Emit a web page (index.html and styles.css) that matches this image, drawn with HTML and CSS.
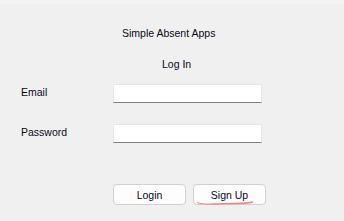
FILE: index.html
```html
<!DOCTYPE html>
<html lang="en">
<head>
  <meta charset="UTF-8">
  <title>Log In - Simple Absent Apps</title>
  <link rel="stylesheet" href="styles.css">
</head>
<body>

<div class="app">
  <div class="app-top"></div>

  <div class="app-title">Simple Absent Apps</div>
  <div class="form-title">Log In</div>

  <div class="form-row">
    <label for="email">Email</label>
    <input type="text" id="email">
  </div>

  <div class="form-row">
    <label for="senha">Password</label>
    <input type="password" id="senha">
  </div>

  <div class="actions">
    <button class="btn">Login</button>
    <button class="btn btn-signup">
      Sign Up
      <svg class="squiggle" width="58" height="5" viewBox="0 0 58 5">
        <path d="M1 2.5 Q 6 4.5 18 4 T 40 3.5 T 57 2" fill="none" stroke="#ef8a8a" stroke-width="1.3"/>
      </svg>
    </button>
  </div>
</div>

</body>
</html>
```

FILE: styles.css
```css
body {
  margin: 0;
  padding: 0;
  background: #f0f0f0;
  font-family: "Liberation Sans", Arial, sans-serif;
  font-size: 10.5px;
  color: #0a0a1a;
}
.app {
  width: 344px;
  height: 221px;
  overflow: hidden;
}
.app-top {
  height: 4px;
  background: #f3f3f3;
}
.app-title {
  margin: 22px 0 0 122px;
  line-height: 14px;
}
.form-title {
  margin: 17px 0 0 162px;
  line-height: 14px;
}
.form-row {
  display: flex;
  align-items: flex-start;
  margin-left: 21px;
  height: 19px;
}
.form-title + .form-row {
  margin-top: 13px;
}
.form-row + .form-row {
  margin-top: 21px;
}
.form-row label {
  width: 92px;
  line-height: 14px;
  padding-top: 1px;
}
.form-row input {
  box-sizing: border-box;
  width: 149px;
  height: 19px;
  margin: 0;
  background: #fff;
  border: 1px solid #e6e6e6;
  border-bottom: 1px solid #808080;
  border-radius: 1px;
  outline: none;
}
.actions {
  display: flex;
  gap: 7px;
  margin: 41px 0 0 113px;
}
.btn {
  position: relative;
  box-sizing: border-box;
  width: 73px;
  height: 21px;
  padding: 0;
  background: #fdfdfd;
  border: 1px solid #d0d0d0;
  border-radius: 4px;
  font-family: inherit;
  font-size: 10.5px;
  color: #0a0a1a;
}
.squiggle {
  position: absolute;
  left: 2px;
  top: 15px;
}
```
